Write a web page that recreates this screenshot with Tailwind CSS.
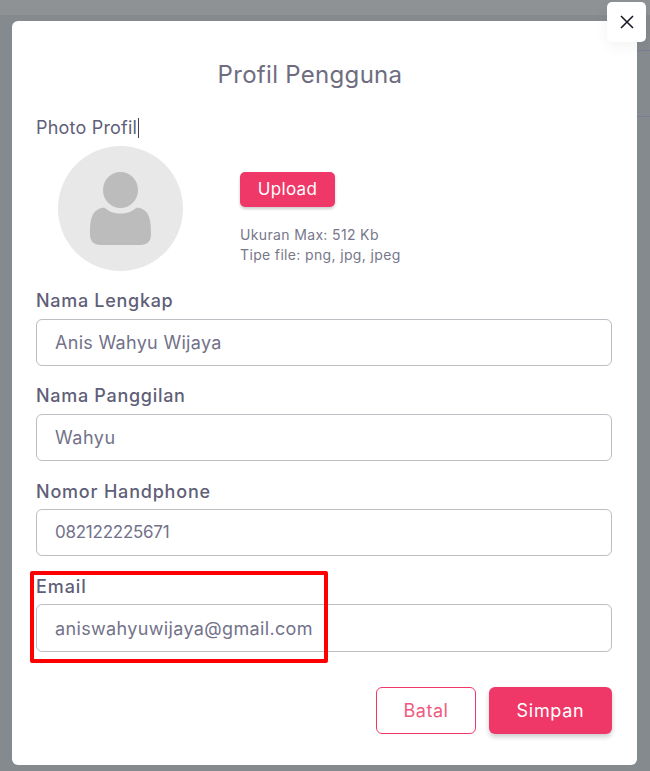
<!DOCTYPE html>
<html lang="en">

<head>
    <meta charset="UTF-8">
    <meta name="viewport" content="width=device-width, initial-scale=1.0">
    <script src="https://cdn.jsdelivr.net/npm/@tailwindcss/browser@4"></script>
    <title>Profil Pengguna</title>
</head>

<body class="relative h-[771px] w-[650px] overflow-hidden bg-[#858a8e] font-['Inter',sans-serif]">
    <!-- dimmed page behind the modal -->
    <div class="absolute inset-x-0 top-0 h-[15px] bg-[#8e9295]"></div>
    <div class="absolute right-0 top-[50px] h-px w-[13px] bg-[#7d7a92]"></div>
    <div class="absolute right-0 top-[116px] h-px w-[13px] bg-[#7d7a92]"></div>

    <!-- modal -->
    <div class="relative float-left ml-[12px] mt-[21px] flex h-[744px] w-[625px] flex-col rounded-md bg-white pl-[24px] pr-[25px] text-[#5f5f78]">
        <h2 class="mt-[39px] h-[29px] pr-[28px] text-center text-[24px] font-normal leading-[29px] tracking-[0.3px] text-[#6e6d80]">Profil Pengguna</h2>

        <div class="mt-[29px] flex h-[20px] items-center text-[18px] leading-[20px] tracking-[0.2px]">
            <span>Photo Profil</span><span class="ml-px h-[20px] w-px bg-[#3f3f50]"></span>
        </div>

        <div class="mt-[8px] flex h-[125px]">
            <div class="ml-[22px] h-[125px] w-[125px] rounded-full bg-[#e8e8e8]">
                <svg width="125" height="125" viewBox="0 0 125 125" fill="#bcbcbc">
                    <ellipse cx="62.5" cy="44" rx="17.5" ry="18" />
                    <path d="M32 88C32 75 33 63 46 61.5C52 66 56 67.5 62.5 67.5C69 67.5 73 66 79 61.5C92 63 93 75 93 88Q93 99 82 99H43Q32 99 32 88Z" />
                </svg>
            </div>
            <div class="ml-[57px] flex flex-col items-start pt-[26px]">
                <button class="h-[35px] w-[95px] rounded-[5px] bg-[#ef3868] text-[17px] tracking-[0.3px] text-white shadow-[0_2px_3px_rgba(0,0,0,0.2)]">Upload</button>
                <p class="mt-[18px] text-[14px] leading-[20px] tracking-[0.35px] text-[#77778a]">Ukuran Max: 512 Kb<br>Tipe file: png, jpg, jpeg</p>
            </div>
        </div>

        <label class="mt-[20px] h-[20px] text-[18px] font-medium leading-[20px] tracking-[0.7px]">Nama Lengkap</label>
        <div class="mt-[8px] flex h-[47px] items-center rounded-[6px] border border-[#bdbdc4] pl-[18px] text-[18px] tracking-[0.3px] text-[#72728a]">Anis Wahyu Wijaya</div>

        <label class="mt-[20px] h-[20px] text-[18px] font-medium leading-[20px] tracking-[0.7px]">Nama Panggilan</label>
        <div class="mt-[8px] flex h-[47px] items-center rounded-[6px] border border-[#bdbdc4] pl-[18px] text-[18px] tracking-[0.5px] text-[#72728a]">Wahyu</div>

        <label class="mt-[21px] h-[20px] text-[18px] font-medium leading-[20px] tracking-[0.8px]">Nomor Handphone</label>
        <div class="mt-[7px] flex h-[47px] items-center rounded-[6px] border border-[#bdbdc4] pl-[18px] text-[17px] tracking-[-0.25px] text-[#72728a]">082122225671</div>

        <label class="mt-[21px] h-[20px] text-[18px] font-medium leading-[20px] tracking-[0.9px]">Email</label>
        <div class="mt-[7px] flex h-[48px] items-center rounded-[6px] border border-[#bdbdc4] pl-[18px] text-[18px] tracking-[0.35px] text-[#72728a]">aniswahyuwijaya@gmail.com</div>

        <div class="mt-[35px] flex justify-end gap-[13px]">
            <button class="h-[47px] w-[100px] rounded-[6px] border border-[#ef3868] bg-white text-[18px] tracking-[0.5px] text-[#ef5a80]">Batal</button>
            <button class="h-[47px] w-[123px] rounded-[6px] bg-[#ef3868] text-[18px] tracking-[0.7px] text-white shadow-[0_3px_5px_rgba(0,0,0,0.2)]">Simpan</button>
        </div>
    </div>

    <!-- close button sits over the modal corner -->
    <button class="absolute left-[607px] top-[2px] flex h-[40px] w-[39px] items-center justify-center rounded-[5px] bg-white shadow-[0_4px_16px_rgba(0,0,0,0.05)]">
        <svg width="14" height="14" viewBox="0 0 14 14" fill="none" stroke="#1a1a26" stroke-width="1.6">
            <path d="M1 1L13 13M13 1L1 13" />
        </svg>
    </button>

    <!-- red annotation box around the email field -->
    <div class="pointer-events-none absolute left-[30px] top-[571px] h-[92px] w-[298px] rounded-[2px] border-[4px] border-[#ff0000]"></div>
</body>

</html>
